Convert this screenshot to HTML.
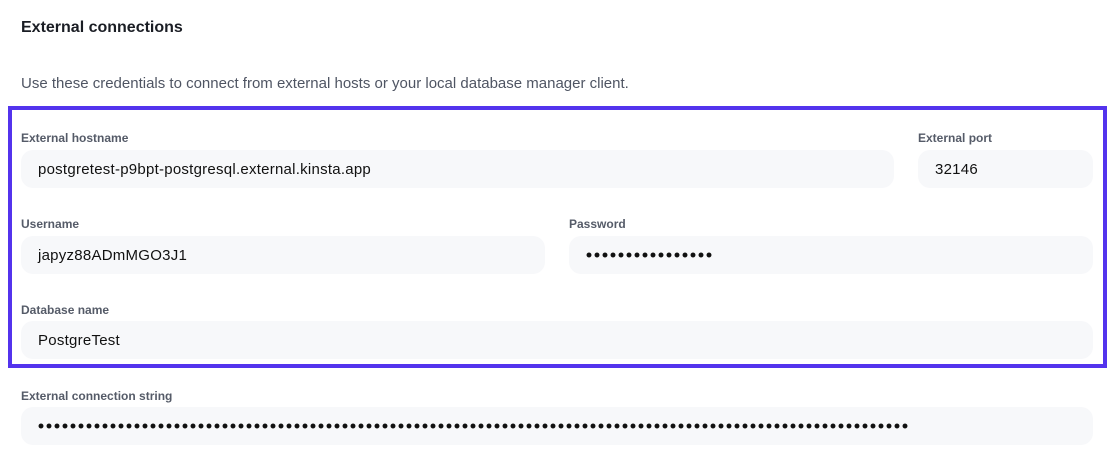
<!DOCTYPE html>
<html><head><style>
*{margin:0;padding:0;box-sizing:border-box}
body{width:1113px;height:469px;background:#fff;font-family:"Liberation Sans",sans-serif;position:relative;overflow:hidden;color:#1a1d24}
.a{position:absolute}
.t{left:21px;top:19px;font-size:16px;font-weight:bold}
.d{left:21px;top:75px;font-size:15px;color:#4f5563}
.box{left:8px;top:106px;width:1099px;height:262px;border:4px solid #5333ed}
.l{font-size:12px;font-weight:bold;color:#555b68}
.i{background:#f7f8fa;border-radius:12px;height:38px;font-size:15px;letter-spacing:0.25px;line-height:40px;padding-left:17px;color:#111}
.dots{top:14px;left:17px;height:8px;background:radial-gradient(circle at 3px 4px,#111 2.2px,transparent 2.7px) 0 0/8px 8px repeat-x}
</style></head><body>
<div class="a t">External connections</div>
<div class="a d">Use these credentials to connect from external hosts or your local database manager client.</div>
<div class="a box"></div>
<div class="a l" style="left:21px;top:131px">External hostname</div>
<div class="a i" style="left:21px;top:150px;width:873px">postgretest-p9bpt-postgresql.external.kinsta.app</div>
<div class="a l" style="left:918px;top:131px">External port</div>
<div class="a i" style="left:918px;top:150px;width:175px">32146</div>
<div class="a l" style="left:21px;top:217px">Username</div>
<div class="a i" style="left:21px;top:236px;width:524px">japyz88ADmMGO3J1</div>
<div class="a l" style="left:569px;top:217px">Password</div>
<div class="a i" style="left:569px;top:236px;width:524px"><div class="a dots" style="left:17px;top:15px;width:128px"></div></div>
<div class="a l" style="left:21px;top:303px">Database name</div>
<div class="a i" style="left:21px;top:321px;width:1072px">PostgreTest</div>
<div class="a l" style="left:21px;top:389px">External connection string</div>
<div class="a i" style="left:21px;top:407px;width:1072px"><div class="a dots" style="left:17px;top:15px;width:872px"></div></div>
</body></html>
